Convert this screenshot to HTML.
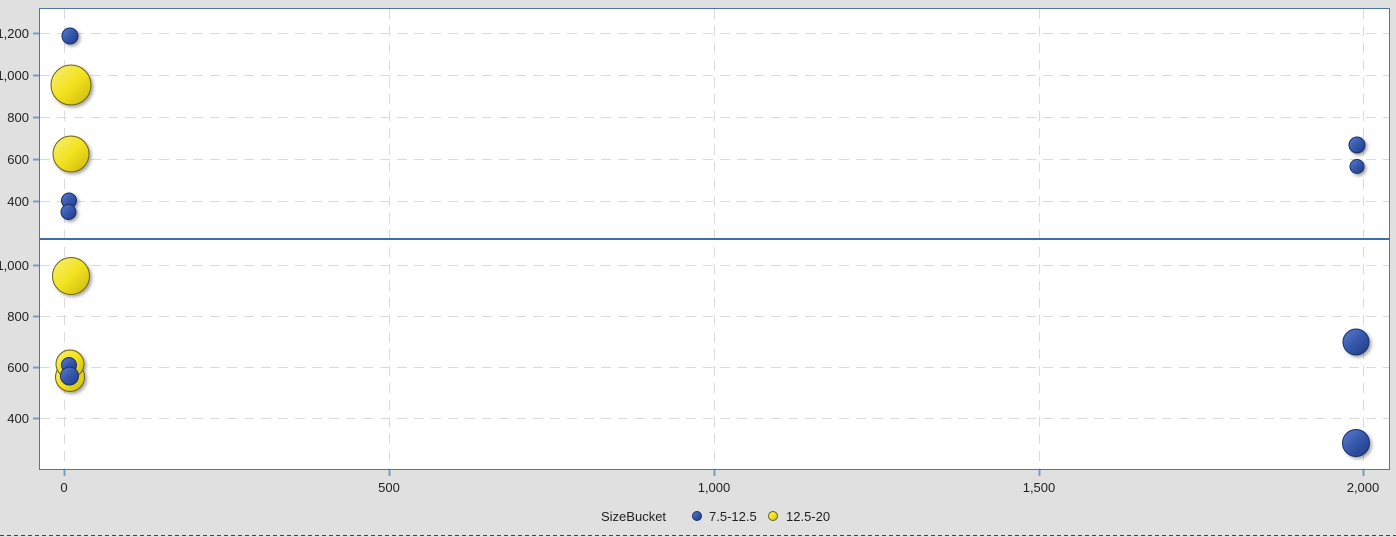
<!DOCTYPE html>
<html><head><meta charset="utf-8"><style>
html,body{margin:0;padding:0;background:#e0e0e0;width:1396px;height:537px;overflow:hidden}
text{font-family:"Liberation Sans","DejaVu Sans",sans-serif;font-size:13px;fill:#222}
</style></head><body>
<svg width="1396" height="537" xmlns="http://www.w3.org/2000/svg">
<defs>
<linearGradient id="gy" x1="0" y1="0" x2="1" y2="1">
<stop offset="0" stop-color="#f7ef7a"/><stop offset="0.5" stop-color="#f2e21f"/><stop offset="1" stop-color="#c9b80a"/></linearGradient>
<linearGradient id="gb" x1="0" y1="0" x2="1" y2="1">
<stop offset="0" stop-color="#5b7fd0"/><stop offset="0.5" stop-color="#3557ab"/><stop offset="1" stop-color="#1f3a80"/></linearGradient>
<filter id="sh" x="-50%" y="-50%" width="200%" height="200%"><feDropShadow dx="2" dy="2" stdDeviation="1.5" flood-color="#000" flood-opacity="0.35"/></filter>
</defs>
<rect x="39.5" y="8.5" width="1350" height="461" fill="#fff" stroke="#4a78a8"/>
<g stroke="#dadada" stroke-dasharray="10,7" stroke-width="1">
<line x1="64.5" y1="9" x2="64.5" y2="469"/><line x1="389.5" y1="9" x2="389.5" y2="469"/>
<line x1="714.5" y1="9" x2="714.5" y2="469"/><line x1="1039.5" y1="9" x2="1039.5" y2="469"/>
<line x1="1363.5" y1="9" x2="1363.5" y2="469"/>
<line x1="40" y1="33.5" x2="1389" y2="33.5"/><line x1="40" y1="75.5" x2="1389" y2="75.5"/>
<line x1="40" y1="117.5" x2="1389" y2="117.5"/><line x1="40" y1="159.5" x2="1389" y2="159.5"/>
<line x1="40" y1="201.5" x2="1389" y2="201.5"/>
<line x1="40" y1="265.5" x2="1389" y2="265.5"/><line x1="40" y1="316.5" x2="1389" y2="316.5"/>
<line x1="40" y1="367.5" x2="1389" y2="367.5"/><line x1="40" y1="418.5" x2="1389" y2="418.5"/>
</g>
<line x1="39" y1="239" x2="1390" y2="239" stroke="#3d6fa3" stroke-width="2"/>
<g stroke="#7a9cc4" stroke-width="2">
<line x1="33" y1="33.5" x2="39" y2="33.5"/><line x1="33" y1="75.5" x2="39" y2="75.5"/>
<line x1="33" y1="117.5" x2="39" y2="117.5"/><line x1="33" y1="159.5" x2="39" y2="159.5"/>
<line x1="33" y1="201.5" x2="39" y2="201.5"/><line x1="33" y1="265.5" x2="39" y2="265.5"/>
<line x1="33" y1="316.5" x2="39" y2="316.5"/><line x1="33" y1="367.5" x2="39" y2="367.5"/>
<line x1="33" y1="418.5" x2="39" y2="418.5"/>
<line x1="64.5" y1="470" x2="64.5" y2="476"/><line x1="389.5" y1="470" x2="389.5" y2="476"/>
<line x1="714.5" y1="470" x2="714.5" y2="476"/><line x1="1039.5" y1="470" x2="1039.5" y2="476"/>
<line x1="1363.5" y1="470" x2="1363.5" y2="476"/>
</g>
<g text-anchor="end">
<text x="29" y="38">1,200</text><text x="29" y="80">1,000</text><text x="29" y="122">800</text>
<text x="29" y="164">600</text><text x="29" y="206">400</text>
<text x="29" y="270">1,000</text><text x="29" y="321">800</text><text x="29" y="372">600</text><text x="29" y="423">400</text>
</g>
<g text-anchor="middle">
<text x="64" y="492">0</text><text x="389" y="492">500</text><text x="714" y="492">1,000</text>
<text x="1039" y="492">1,500</text><text x="1363" y="492">2,000</text>
</g>
<g filter="url(#sh)">
<g fill="url(#gy)" stroke="#6b6210" stroke-width="1">
<circle cx="71" cy="85" r="20"/><circle cx="71" cy="154" r="18"/><circle cx="71" cy="276" r="18.5"/>
<circle cx="70" cy="377" r="14.5"/><circle cx="70" cy="364" r="14"/>
</g>
<g fill="url(#gb)" stroke="#1a2f66" stroke-width="1">
<circle cx="70" cy="36" r="8"/><circle cx="69" cy="200.5" r="7.5"/><circle cx="68.5" cy="212" r="7.5"/>
<circle cx="69" cy="365" r="7.5"/><circle cx="69.5" cy="376" r="9"/>
<circle cx="1357" cy="145" r="8"/><circle cx="1357" cy="166.5" r="7"/>
<circle cx="1356" cy="342" r="13"/><circle cx="1356" cy="443" r="13.5"/>
</g>
</g>
<text x="601" y="521">SizeBucket</text>
<circle cx="697" cy="516" r="4.5" fill="url(#gb)" stroke="#1a2f66"/>
<text x="709" y="521">7.5-12.5</text>
<circle cx="773" cy="516" r="4.5" fill="url(#gy)" stroke="#6b6210"/>
<text x="786" y="521">12.5-20</text>
<line x1="0" y1="535.5" x2="1396" y2="535.5" stroke="#2a2aff" stroke-dasharray="4,3" stroke-width="1"/>
</svg>
</body></html>
